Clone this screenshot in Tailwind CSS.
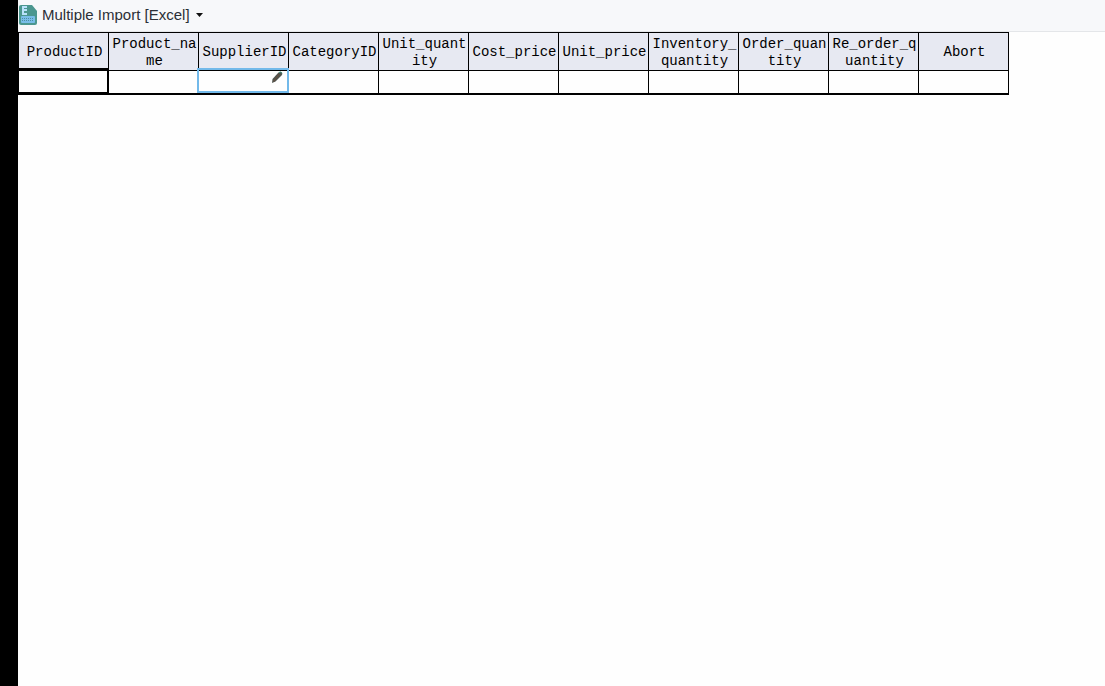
<!DOCTYPE html>
<html lang="en">
<head>
<meta charset="utf-8">
<title>Multiple Import [Excel]</title>
<script src="https://cdn.jsdelivr.net/npm/@tailwindcss/browser@4"></script>
</head>
<body class="flex min-h-screen bg-[#fefefe] font-['Liberation_Sans',sans-serif] text-black">
<aside class="w-[18px] shrink-0 bg-black"></aside>
<div class="min-w-0 grow">
  <header class="flex h-8 items-center border-b border-[#e4e6e9] bg-[#f7f8fa] pb-0.5">
    <button type="button" class="flex items-center text-[15px] leading-5 text-[#2b2f36]">
      <svg class="mr-1 h-5 w-5" viewBox="0 0 20 20" aria-hidden="true">
        <path d="M3 0H14L19 6V18Q19 20 17 20H3Q1 20 1 18V2Q1 0 3 0Z" fill="#4b978f"/>
        <path d="M4 1H9V3H6V4H9V6H6V8H9V10H4Z" fill="#b9e2fb"/>
        <rect x="3" y="11" width="14" height="7" rx="1" fill="#78bde8"/>
        <path d="M4 13.500H16M4 15.500H16" stroke="#4b90a4" stroke-dasharray="1 1"/>
      </svg>
      <span>Multiple Import [Excel]</span>
      <svg class="ml-1.5 h-1 w-[7px]" viewBox="0 0 7 4" aria-hidden="true"><path d="M0 0H7L3.500 4Z" fill="#111"/></svg>
    </button>
  </header>
  <main>
    <table class="w-full max-w-[991px] table-fixed border-separate border-spacing-0 border-t border-l border-black">
      <thead class="font-['Liberation_Mono',monospace] text-[14px] leading-[17px]">
        <tr class="h-[38px] [&>th]:border-r [&>th]:border-b [&>th]:border-black [&>th]:bg-[#e7e9f2] [&>th]:p-0 [&>th]:pt-0.5 [&>th]:pl-0.5 [&>th]:font-normal [&>th]:break-all">
          <th scope="col">ProductID</th>
          <th scope="col">Product_na<wbr>me</th>
          <th scope="col">SupplierID</th>
          <th scope="col">CategoryID</th>
          <th scope="col">Unit_quant<wbr>ity</th>
          <th scope="col">Cost_price</th>
          <th scope="col">Unit_price</th>
          <th scope="col">Inventory_<wbr>quantity</th>
          <th scope="col">Order_quan<wbr>tity</th>
          <th scope="col">Re_order_q<wbr>uantity</th>
          <th scope="col">Abort</th>
        </tr>
      </thead>
      <tbody>
        <tr class="h-6 [&>td]:border-r [&>td]:border-b-2 [&>td]:border-black [&>td]:p-0">
          <td class="relative"><span class="absolute -top-[3px] -right-px -bottom-0.5 left-0 border-y-[3px] border-r-2 border-black"></span></td>
          <td></td>
          <td class="relative">
            <span class="absolute -top-[3px] -right-px -left-0.5 bottom-0 z-10 border-2 border-[#72b9ea]"></span>
            <button type="button" aria-label="Edit SupplierID" class="absolute top-0 right-[5px] z-20 h-3 w-3">
              <svg viewBox="0 0 12 12" aria-hidden="true"><path d="M1 12L1.500 8L7.500 1.500Q9.500 0 11 1.500Q12 3 10.500 4.500L4.500 10.500Z" fill="#4f5650"/><path d="M2.500 10.500L8.500 3" stroke="#625044" stroke-width="1.500"/><path d="M8 1.500Q9.500 .500 11 2" stroke="#459b86" fill="none"/></svg>
            </button>
          </td>
          <td></td><td></td><td></td><td></td><td></td><td></td><td></td><td></td>
        </tr>
      </tbody>
    </table>
  </main>
</div>
</body>
</html>
